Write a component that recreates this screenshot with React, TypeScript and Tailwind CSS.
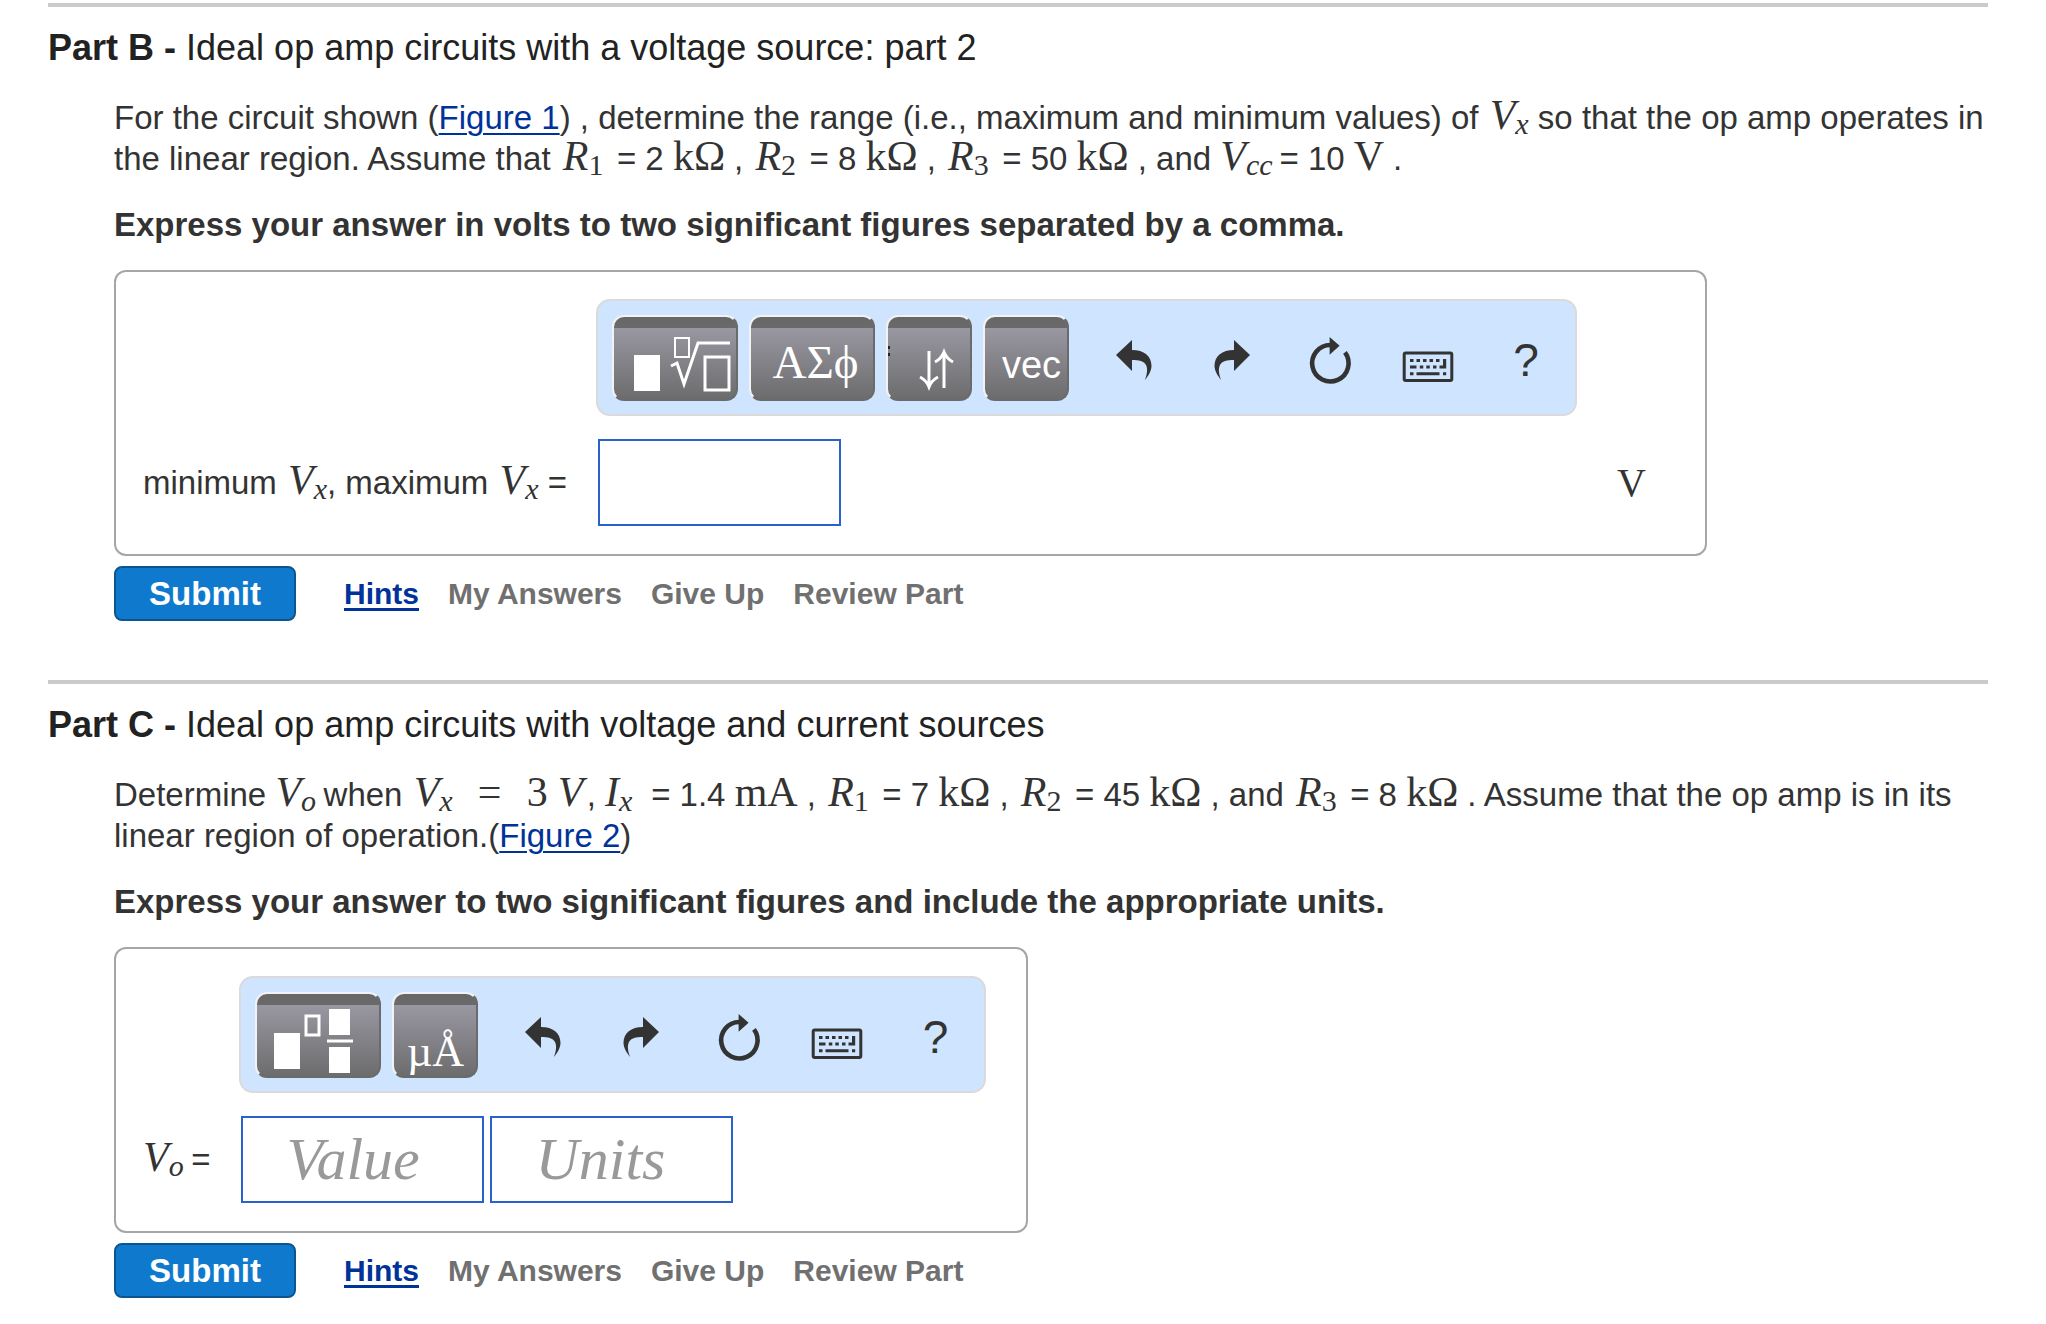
import React from 'react';
import clsx from 'clsx';

const serif = "font-['Liberation_Serif',serif]";

type MathProps = {
  base: string;
  sub?: string;
  upright?: boolean;
  uprightSub?: boolean;
  className?: string;
};

const MathTerm = ({ base, sub, upright, uprightSub, className }: MathProps) => (
  <span className={clsx('inline-block whitespace-nowrap text-[42px] leading-[0]', serif, className)}>
    <span className={upright ? 'not-italic' : 'italic'}>{base}</span>
    {sub && (
      <sub className={clsx('static align-[-5px] text-[30px]', uprightSub ? 'not-italic' : 'italic')}>{sub}</sub>
    )}
  </span>
);

const Resistor = ({ n }: { n: string }) => <MathTerm base="R" sub={n} uprightSub className="w-[48px] pl-[3px]" />;
const KiloOhm = () => <MathTerm base="kΩ" upright className="w-[52px]" />;
const Vx = () => <MathTerm base="V" sub="x" className="w-[41px] pl-[2px]" />;

const FigureLink = ({ href, children }: { href: string; children: React.ReactNode }) => (
  <a href={href} className="text-[#003399] underline decoration-2 underline-offset-4">
    {children}
  </a>
);

const KeyButton = ({ label, className, children }: { label: string; className?: string; children: React.ReactNode }) => (
  <button
    type="button"
    aria-label={label}
    className={clsx(
      'flex h-[86px] shrink-0 justify-center overflow-hidden rounded-xl border-2 border-t-[#f2f2f2] border-r-[#6b6b6b] border-b-[#6b6b6b] border-l-[#f2f2f2] text-white',
      'bg-[linear-gradient(to_bottom,#666666_0px,#6a6a6a_13px,#9997a1_13px,#6b6b6c_100%)] bg-origin-border',
      className,
    )}
  >
    {children}
  </button>
);

const TemplatesKey = () => (
  <KeyButton label="Templates" className="w-[126px]">
    <svg viewBox="2 2 122 82" className="h-full w-full" fill="none" stroke="white">
      <rect x="22" y="40" width="26" height="36" fill="white" stroke="none" />
      <rect x="63" y="23" width="14" height="19" strokeWidth="2" />
      <path d="M59 51L65 48L72 69L86 28H118" strokeWidth="3" />
      <rect x="93" y="42" width="24" height="33" strokeWidth="3" />
    </svg>
  </KeyButton>
);

const FractionKey = () => (
  <KeyButton label="Templates" className="w-[126px]">
    <svg viewBox="2 2 122 82" className="h-full w-full" fill="none" stroke="white">
      <rect x="19" y="41" width="26" height="36" fill="white" stroke="none" />
      <rect x="51" y="24" width="13" height="19" strokeWidth="3" />
      <rect x="74" y="17" width="21" height="26" fill="white" stroke="none" />
      <path d="M72 49H98" strokeWidth="3" />
      <rect x="74" y="55" width="21" height="26" fill="white" stroke="none" />
    </svg>
  </KeyButton>
);

const SymbolsKey = () => (
  <KeyButton label="Symbols" className="w-[126px] items-end pb-[13px] pl-[7px]">
    <span className={clsx('text-[47px] leading-[47px]', serif)}>ΑΣϕ</span>
  </KeyButton>
);

const ArrowsKey = () => (
  <KeyButton label="Accents" className="w-[86px]">
    <svg viewBox="2 2 82 82" className="h-full w-full" fill="none" stroke="white" strokeWidth="3">
      <path d="M43 36V72M34 62C38 64 41 67 43 72C45 67 48 64 52 62" />
      <path d="M58 73V37M49 47C53 45 56 42 58 37C60 42 63 45 67 47" />
      <path d="M2 31h2v3h-2zM2 38h2v3h-2z" fill="#222" stroke="none" />
    </svg>
  </KeyButton>
);

const VectorKey = () => (
  <KeyButton label="Vectors" className="w-[86px] items-end pb-[15px] pl-[11px]">
    <span className="text-[38px] leading-[38px]">vec</span>
  </KeyButton>
);

const UnitsKey = () => (
  <KeyButton label="Unit symbols" className="w-[86px] items-end pb-[2px]">
    <span className={clsx('text-[44px] leading-[44px]', serif)}>µÅ</span>
  </KeyButton>
);

const ToolButton = ({ label, children }: { label: string; children: React.ReactNode }) => (
  <button type="button" aria-label={label} className="flex w-[98px] shrink-0 items-center justify-center self-stretch text-[#333]">
    {children}
  </button>
);

const arrowPath = 'M12 27L28 12V22C40 22 47.5 28 47.5 38C47.5 43 44 48 41 52C43 46 44 41 42 37C40 33 35 32 28 32V43Z';

const Toolbar = ({ children }: { children: React.ReactNode }) => (
  <div className="flex h-[117px] w-fit items-center rounded-[14px] border-2 border-[#dadada] bg-[#cfe5ff] pl-[14px]">
    <div className="mr-4 flex gap-[11px]">{children}</div>
    <ToolButton label="Undo">
      <svg viewBox="0 0 60 60" className="size-[60px]" fill="currentColor">
        <path d={arrowPath} />
      </svg>
    </ToolButton>
    <ToolButton label="Redo">
      <svg viewBox="0 0 60 60" className="size-[60px]" fill="currentColor">
        <path d={arrowPath} transform="matrix(-1 0 0 1 60 0)" />
      </svg>
    </ToolButton>
    <ToolButton label="Reset">
      <svg viewBox="0 0 60 60" className="size-[60px]" fill="none">
        <path d="M45 24.4A18.2 18.2 0 1 1 30.4 17" stroke="currentColor" strokeWidth="4.6" />
        <path d="M29.6 9L39.6 17.8L29.6 26.8Z" fill="currentColor" />
      </svg>
    </ToolButton>
    <ToolButton label="Keyboard shortcuts">
      <svg viewBox="0 0 60 60" className="size-[60px]" fill="currentColor">
        <rect x="6.2" y="25" width="47.6" height="27.6" rx="1.5" fill="none" stroke="currentColor" strokeWidth="3" />
        <path d="M12 31h3.5v3H12zM18.5 31H22v3h-3.5zM25 31h3.5v3H25zM31.5 31H35v3h-3.5zM38 31h3.5v3H38z" />
        <path d="M12 37.6h6.5v3H12zM21.8 37.6h3.5v3h-3.5zM28.3 37.6h3.5v3h-3.5zM35 37.6h3.5v3H35zM45 31h3.2v9.6h-6.7v-3H45z" />
        <path d="M12 44.2h3.5v3H12zM18.5 44.2h23v3h-23zM45 44.2h3.2v3H45z" />
      </svg>
    </ToolButton>
    <ToolButton label="Help">
      <span className="pt-1 text-[46px] leading-[46px]">?</span>
    </ToolButton>
  </div>
);

const AnswerInput = (props: React.InputHTMLAttributes<HTMLInputElement>) => (
  <input
    type="text"
    className={clsx(
      'h-[87px] w-[243px] border-2 border-[#2a62cc] bg-white pl-[43px] text-[60px] italic text-[#333] outline-none placeholder:text-[#999]',
      serif,
    )}
    {...props}
  />
);

const Actions = () => (
  <div className="mt-[10px] flex items-center text-[30px] font-bold text-[#707070]">
    <button
      type="submit"
      className="h-[55px] w-[182px] rounded-lg border-2 border-[#0b5590] bg-[#0f7acd] text-[33px] leading-[41px] text-white"
    >
      Submit
    </button>
    <nav className="ml-12 flex gap-[29px]">
      <a href="#hints" className="text-[#003399] underline decoration-[3px] underline-offset-4">
        Hints
      </a>
      <a href="#answers">My Answers</a>
      <a href="#give-up">Give Up</a>
      <a href="#review">Review Part</a>
    </nav>
  </div>
);

type PartProps = {
  name: string;
  title: string;
  instruction: string;
  question: React.ReactNode;
  children: React.ReactNode;
};

const Part = ({ name, title, instruction, question, children }: PartProps) => (
  <section className="border-t-4 border-[#cbcbcb]">
    <h2 className="mt-[21px] text-[36px] leading-[40px] text-[#222]">
      <b>{name} -</b> {title}
    </h2>
    <form className="pl-[66px]" onSubmit={(e) => e.preventDefault()}>
      <p className="mt-[29px]">{question}</p>
      <p className="mt-[25px] font-bold">{instruction}</p>
      {children}
      <Actions />
    </form>
  </section>
);

const App = () => (
  <main className="flex flex-col gap-[59px] bg-white pt-[3px] pr-[58px] pb-[26px] pl-12 font-['Liberation_Sans',Arial,sans-serif] text-[33px] leading-[41px] text-[#333]">
    <Part
      name="Part B"
      title="Ideal op amp circuits with a voltage source: part 2"
      instruction="Express your answer in volts to two significant figures separated by a comma."
      question={
        <>
          For the circuit shown (<FigureLink href="#figure1">Figure 1</FigureLink>) , determine the range (i.e., maximum
          and minimum values) of <Vx /> so that the op amp operates in the linear region. Assume that{' '}
          <Resistor n="1" /> = 2 <KiloOhm /> , <Resistor n="2" /> = 8 <KiloOhm /> , <Resistor n="3" /> = 50{' '}
          <KiloOhm /> , and <MathTerm base="V" sub="cc" className="w-[50px]" /> = 10{' '}
          <MathTerm base="V" upright className="w-[30px]" /> .
        </>
      }
    >
      <div className="mt-[25px] grid w-[85%] grid-cols-[auto_auto_1fr] items-center gap-x-[29px] gap-y-[23px] rounded-xl border-2 border-[#a6a6a6] pt-[27px] pr-[59px] pb-[28px] pl-[27px]">
        <div className="col-start-2">
          <Toolbar>
            <TemplatesKey />
            <SymbolsKey />
            <ArrowsKey />
            <VectorKey />
          </Toolbar>
        </div>
        <label htmlFor="vx-range" className="col-start-1 whitespace-nowrap">
          minimum <Vx />, maximum <Vx /> =
        </label>
        <div className="flex pl-[2px]">
          <AnswerInput id="vx-range" />
        </div>
        <span className={clsx('justify-self-end text-[40px]', serif)}>V</span>
      </div>
    </Part>

    <Part
      name="Part C"
      title="Ideal op amp circuits with voltage and current sources"
      instruction="Express your answer to two significant figures and include the appropriate units."
      question={
        <>
          Determine <MathTerm base="V" sub="o" className="w-[39px]" /> when <Vx />
          <MathTerm base="=" upright className="w-[74px] text-center" />
          <MathTerm base="3" upright className="w-[31px]" />
          <MathTerm base="V" className="w-[29px]" />, <MathTerm base="I" sub="x" className="w-[37px]" /> = 1.4{' '}
          <MathTerm base="mA" upright className="w-[63px]" /> , <Resistor n="1" /> = 7 <KiloOhm /> ,{' '}
          <Resistor n="2" /> = 45 <KiloOhm /> , and <Resistor n="3" /> = 8 <KiloOhm /> . Assume that the op amp is in
          its linear region of operation.(<FigureLink href="#figure2">Figure 2</FigureLink>)
        </>
      }
    >
      <div className="mt-[25px] grid w-fit grid-cols-[auto_auto] items-center gap-x-[29px] gap-y-[23px] rounded-xl border-2 border-[#a6a6a6] pt-[27px] pr-10 pb-[28px] pl-[27px]">
        <div className="col-start-2">
          <Toolbar>
            <FractionKey />
            <UnitsKey />
          </Toolbar>
        </div>
        <label htmlFor="vo-value" className="col-start-1 whitespace-nowrap">
          <MathTerm base="V" sub="o" className="w-[39px]" /> =
        </label>
        <div className="flex gap-[6px] pl-[2px]">
          <AnswerInput id="vo-value" placeholder="Value" />
          <AnswerInput aria-label="Units" placeholder="Units" />
        </div>
      </div>
    </Part>
  </main>
);

export default App;
